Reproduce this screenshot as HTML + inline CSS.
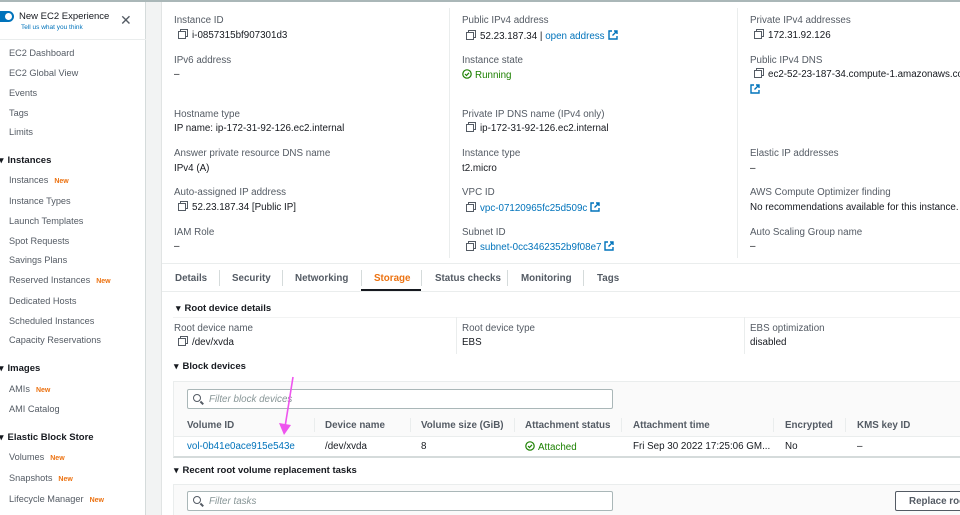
<!DOCTYPE html>
<html><head><meta charset="utf-8"><style>
*{box-sizing:border-box;margin:0;padding:0}
html{overflow:hidden;width:960px;height:515px}
body{width:960px;height:515px;overflow:hidden;background:#f2f3f3;font-family:"Liberation Sans",sans-serif;color:#16191f;font-size:9.8px;position:relative}
.a{position:absolute;white-space:nowrap}
#side{position:absolute;left:0;top:2px;width:146px;height:513px;background:#fff;border-right:1px solid #d5dbdb}
#top{position:absolute;left:0;top:0;width:960px;height:2px;background:#aab7b8}
#panel{position:absolute;left:161px;top:2px;width:810px;height:513px;background:#fff;border-left:1px solid #e1e4e4}
.nav{color:#545b64;font-size:9.2px}
.new{color:#ec7211;font-size:7px;font-weight:bold;margin-left:6px}
.sec{font-weight:bold;color:#16191f;font-size:9.5px}
.lbl{color:#545b64;font-size:9.8px}
.val{color:#16191f;font-size:9.8px}
.lnk{color:#0073bb}
.cp{display:inline-block;width:8px;height:8px;border:1px solid #545b64;margin-right:6px;position:relative;vertical-align:-1px;background:#fff;box-shadow:2px -2px 0 -1px #fff,2px -2px 0 0 #545b64}
.ext{display:inline-block;width:10px;height:10px;margin-left:3px;vertical-align:-1px}
.ok{display:inline-block;width:10px;height:10px;margin-right:3px;vertical-align:-1px}
.tab{color:#545b64;font-weight:bold;font-size:9.8px}
.tri{font-size:9px;margin-right:4px}
.th{font-weight:bold;color:#545b64;font-size:9.8px}
</style></head><body>
<svg width="0" height="0" style="position:absolute"><defs>
<symbol id="ex" viewBox="0 0 10 10"><path d="M4 1H1v8h8V6" fill="none" stroke="#0073bb" stroke-width="1.4"/><path d="M6 1h3v3M9 1L4.5 5.5" fill="none" stroke="#0073bb" stroke-width="1.4"/></symbol>
<symbol id="okk" viewBox="0 0 10 10"><circle cx="5" cy="5" r="4.2" fill="none" stroke="#1d8102" stroke-width="1.2"/><path d="M3 5l1.5 1.5L7 3.8" fill="none" stroke="#1d8102" stroke-width="1.2"/></symbol>
</defs></svg>
<div id="top"></div>
<div id="side">
<div class="a" style="left:-6px;top:9px;width:20px;height:11px;border-radius:6px;background:#0073bb"></div>
<div class="a" style="left:5px;top:11px;width:7px;height:7px;border-radius:50%;background:#fff"></div>
<div class="a" style="left:19px;top:9px;font-size:9.5px">New EC2 Experience</div>
<div class="a" style="left:21px;top:22px;font-size:6.5px;color:#0073bb">Tell us what you think</div>
<div class="a" style="left:120px;top:10px;font-size:14px;color:#545b64">✕</div>
<div class="a" style="left:0;top:37px;width:146px;border-top:1px solid #eaeded"></div>
<div class="a nav" style="left:9px;top:46px">EC2 Dashboard</div>
<div class="a nav" style="left:9px;top:66px">EC2 Global View</div>
<div class="a nav" style="left:9px;top:86px">Events</div>
<div class="a nav" style="left:9px;top:106px">Tags</div>
<div class="a nav" style="left:9px;top:125px">Limits</div>
<div class="a sec" style="left:-1px;top:153px"><span class="tri">▾</span>Instances</div>
<div class="a nav" style="left:9px;top:173px">Instances<span class="new">New</span></div>
<div class="a nav" style="left:9px;top:194px">Instance Types</div>
<div class="a nav" style="left:9px;top:214px">Launch Templates</div>
<div class="a nav" style="left:9px;top:234px">Spot Requests</div>
<div class="a nav" style="left:9px;top:253px">Savings Plans</div>
<div class="a nav" style="left:9px;top:273px">Reserved Instances<span class="new">New</span></div>
<div class="a nav" style="left:9px;top:294px">Dedicated Hosts</div>
<div class="a nav" style="left:9px;top:314px">Scheduled Instances</div>
<div class="a nav" style="left:9px;top:333px">Capacity Reservations</div>
<div class="a sec" style="left:-1px;top:361px"><span class="tri">▾</span>Images</div>
<div class="a nav" style="left:9px;top:382px">AMIs<span class="new">New</span></div>
<div class="a nav" style="left:9px;top:402px">AMI Catalog</div>
<div class="a sec" style="left:-1px;top:430px"><span class="tri">▾</span>Elastic Block Store</div>
<div class="a nav" style="left:9px;top:450px">Volumes<span class="new">New</span></div>
<div class="a nav" style="left:9px;top:471px">Snapshots<span class="new">New</span></div>
<div class="a nav" style="left:9px;top:492px">Lifecycle Manager<span class="new">New</span></div>
</div>
<div id="panel"></div>
<div class="a" style="left:449px;top:8px;height:250px;border-left:1px solid #eaeded"></div>
<div class="a" style="left:737px;top:8px;height:250px;border-left:1px solid #eaeded"></div>
<div class="a lbl" style="left:174px;top:15px">Instance ID</div>
<div class="a val" style="left:178px;top:30px"><span class="cp"></span>i-0857315bf907301d3</div>
<div class="a lbl" style="left:174px;top:55px">IPv6 address</div>
<div class="a val" style="left:174px;top:69px">–</div>
<div class="a lbl" style="left:174px;top:109px">Hostname type</div>
<div class="a val" style="left:174px;top:123px">IP name: ip-172-31-92-126.ec2.internal</div>
<div class="a lbl" style="left:174px;top:148px">Answer private resource DNS name</div>
<div class="a val" style="left:174px;top:163px">IPv4 (A)</div>
<div class="a lbl" style="left:174px;top:187px">Auto-assigned IP address</div>
<div class="a val" style="left:178px;top:202px"><span class="cp"></span>52.23.187.34 [Public IP]</div>
<div class="a lbl" style="left:174px;top:227px">IAM Role</div>
<div class="a val" style="left:174px;top:241px">–</div>

<div class="a lbl" style="left:462px;top:15px">Public IPv4 address</div>
<div class="a val" style="left:466px;top:30px"><span class="cp"></span>52.23.187.34 | <span class="lnk">open address</span><svg class="ext"><use href="#ex"/></svg></div>
<div class="a lbl" style="left:462px;top:55px">Instance state</div>
<div class="a val" style="left:462px;top:69px;color:#1d8102"><svg class="ok"><use href="#okk"/></svg>Running</div>
<div class="a lbl" style="left:462px;top:109px">Private IP DNS name (IPv4 only)</div>
<div class="a val" style="left:466px;top:123px"><span class="cp"></span>ip-172-31-92-126.ec2.internal</div>
<div class="a lbl" style="left:462px;top:148px">Instance type</div>
<div class="a val" style="left:462px;top:163px">t2.micro</div>
<div class="a lbl" style="left:462px;top:187px">VPC ID</div>
<div class="a val" style="left:466px;top:202px"><span class="cp"></span><span class="lnk">vpc-07120965fc25d509c</span><svg class="ext"><use href="#ex"/></svg></div>
<div class="a lbl" style="left:462px;top:227px">Subnet ID</div>
<div class="a val" style="left:466px;top:241px"><span class="cp"></span><span class="lnk">subnet-0cc3462352b9f08e7</span><svg class="ext"><use href="#ex"/></svg></div>

<div class="a lbl" style="left:750px;top:15px">Private IPv4 addresses</div>
<div class="a val" style="left:754px;top:30px"><span class="cp"></span>172.31.92.126</div>
<div class="a lbl" style="left:750px;top:55px">Public IPv4 DNS</div>
<div class="a val" style="left:754px;top:69px"><span class="cp"></span>ec2-52-23-187-34.compute-1.amazonaws.com</div>
<div class="a" style="left:750px;top:84px"><svg class="ext" style="margin-left:0"><use href="#ex"/></svg></div>
<div class="a lbl" style="left:750px;top:148px">Elastic IP addresses</div>
<div class="a val" style="left:750px;top:163px">–</div>
<div class="a lbl" style="left:750px;top:187px">AWS Compute Optimizer finding</div>
<div class="a val" style="left:750px;top:202px">No recommendations available for this instance.</div>
<div class="a lbl" style="left:750px;top:227px">Auto Scaling Group name</div>
<div class="a val" style="left:750px;top:241px">–</div>

<div class="a" style="left:162px;top:263px;width:800px;border-top:1px solid #eaeded"></div>
<div class="a" style="left:162px;top:291px;width:800px;border-top:1px solid #eaeded"></div>
<div class="a tab" style="left:175px;top:273px">Details</div>
<div class="a" style="left:219px;top:270px;height:16px;border-left:1px solid #d5dbdb"></div>
<div class="a tab" style="left:232px;top:273px">Security</div>
<div class="a" style="left:282px;top:270px;height:16px;border-left:1px solid #d5dbdb"></div>
<div class="a tab" style="left:295px;top:273px">Networking</div>
<div class="a" style="left:361px;top:270px;height:16px;border-left:1px solid #d5dbdb"></div>
<div class="a tab" style="left:374px;top:273px;color:#ec7211">Storage</div>
<div class="a" style="left:361px;top:289px;width:60px;height:2px;background:#16191f"></div>
<div class="a" style="left:421px;top:270px;height:16px;border-left:1px solid #d5dbdb"></div>
<div class="a tab" style="left:435px;top:273px">Status checks</div>
<div class="a" style="left:507px;top:270px;height:16px;border-left:1px solid #d5dbdb"></div>
<div class="a tab" style="left:521px;top:273px">Monitoring</div>
<div class="a" style="left:583px;top:270px;height:16px;border-left:1px solid #d5dbdb"></div>
<div class="a tab" style="left:597px;top:273px">Tags</div>

<div class="a sec" style="left:176px;top:303px"><span class="tri">▾</span>Root device details</div>
<div class="a" style="left:173px;top:317px;width:790px;border-top:1px solid #f2f3f3"></div>
<div class="a" style="left:456px;top:317px;height:37px;border-left:1px solid #eaeded"></div>
<div class="a" style="left:744px;top:317px;height:37px;border-left:1px solid #eaeded"></div>
<div class="a lbl" style="left:174px;top:323px">Root device name</div>
<div class="a val" style="left:178px;top:337px"><span class="cp"></span>/dev/xvda</div>
<div class="a lbl" style="left:462px;top:323px">Root device type</div>
<div class="a val" style="left:462px;top:337px">EBS</div>
<div class="a lbl" style="left:750px;top:323px">EBS optimization</div>
<div class="a val" style="left:750px;top:337px">disabled</div>

<div class="a sec" style="left:174px;top:361px"><span class="tri">▾</span>Block devices</div>
<div class="a" style="left:173px;top:381px;width:800px;height:77px;background:#fafafa;border:1px solid #eaeded;border-bottom:2px solid #d5dbdb"></div>
<div class="a" style="left:187px;top:389px;width:426px;height:20px;background:#fff;border:1px solid #aab7b8;border-radius:2px"></div>
<div class="a" style="left:193px;top:394px;width:8px;height:8px;border:1.4px solid #545b64;border-radius:50%"></div>
<div class="a" style="left:200px;top:402px;width:4px;height:1.5px;background:#545b64;transform:rotate(45deg)"></div>
<div class="a" style="left:209px;top:394px;color:#879596;font-style:italic">Filter block devices</div>
<div class="a th" style="left:187px;top:420px">Volume ID</div>
<div class="a" style="left:314px;top:418px;height:14px;border-left:1px solid #eaeded"></div>
<div class="a th" style="left:325px;top:420px">Device name</div>
<div class="a" style="left:410px;top:418px;height:14px;border-left:1px solid #eaeded"></div>
<div class="a th" style="left:421px;top:420px">Volume size (GiB)</div>
<div class="a" style="left:514px;top:418px;height:14px;border-left:1px solid #eaeded"></div>
<div class="a th" style="left:525px;top:420px">Attachment status</div>
<div class="a" style="left:621px;top:418px;height:14px;border-left:1px solid #eaeded"></div>
<div class="a th" style="left:633px;top:420px">Attachment time</div>
<div class="a" style="left:773px;top:418px;height:14px;border-left:1px solid #eaeded"></div>
<div class="a th" style="left:785px;top:420px">Encrypted</div>
<div class="a" style="left:845px;top:418px;height:14px;border-left:1px solid #eaeded"></div>
<div class="a th" style="left:857px;top:420px">KMS key ID</div>
<div class="a" style="left:174px;top:436px;width:800px;height:20px;background:#fff;border-top:1px solid #eaeded"></div>
<div class="a lnk" style="left:187px;top:441px">vol-0b41e0ace915e543e</div>
<div class="a val" style="left:325px;top:441px">/dev/xvda</div>
<div class="a val" style="left:421px;top:441px">8</div>
<div class="a val" style="left:525px;top:441px;color:#1d8102"><svg class="ok"><use href="#okk"/></svg>Attached</div>
<div class="a val" style="left:633px;top:441px">Fri Sep 30 2022 17:25:06 GM...</div>
<div class="a val" style="left:785px;top:441px">No</div>
<div class="a val" style="left:857px;top:441px">–</div>

<svg class="a" style="left:275px;top:375px" width="25" height="62"><line x1="18" y1="2" x2="10" y2="52" stroke="#ee55ee" stroke-width="1.6"/><polygon points="4,48 16,50 9,60" fill="#ee55ee"/></svg>

<div class="a sec" style="left:174px;top:465px"><span class="tri">▾</span>Recent root volume replacement tasks</div>
<div class="a" style="left:173px;top:484px;width:800px;height:40px;background:#fafafa;border:1px solid #eaeded"></div>
<div class="a" style="left:187px;top:491px;width:426px;height:20px;background:#fff;border:1px solid #aab7b8;border-radius:2px"></div>
<div class="a" style="left:193px;top:496px;width:8px;height:8px;border:1.4px solid #545b64;border-radius:50%"></div>
<div class="a" style="left:200px;top:504px;width:4px;height:1.5px;background:#545b64;transform:rotate(45deg)"></div>
<div class="a" style="left:209px;top:496px;color:#879596;font-style:italic">Filter tasks</div>
<div class="a" style="left:895px;top:491px;width:80px;height:20px;background:#fff;border:1px solid #545b64;border-radius:2px;font-weight:bold;color:#545b64;padding:4px 0 0 13px">Replace root volume</div>
</body></html>
